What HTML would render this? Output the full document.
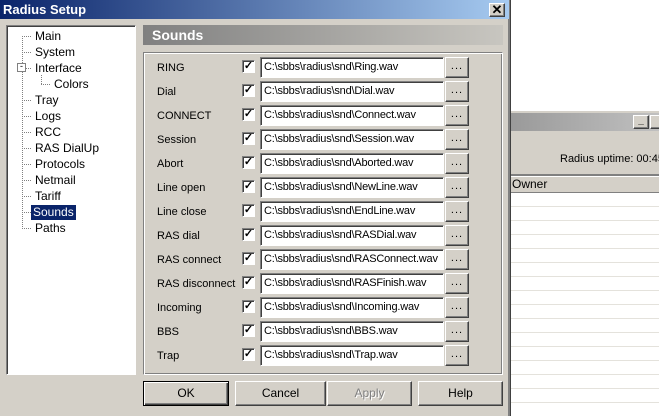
<!DOCTYPE html>
<html><head><style>
*{margin:0;padding:0;box-sizing:border-box}
body{width:659px;height:416px;background:#fff;position:relative;overflow:hidden;font-family:"Liberation Sans",sans-serif;font-size:11px;color:#000}
.a{position:absolute}
.raised{background:#d4d0c8;border:1px solid;border-color:#fff #404040 #404040 #fff;box-shadow:inset -1px -1px 0 #808080}
.sunk{background:#fff;border:1px solid;border-color:#808080 #fff #fff #808080;box-shadow:inset 1px 1px 0 #404040}
.ti{position:absolute;left:33px;height:14px;line-height:14px;padding:0 2px;font-size:12px}
.dh{position:absolute;left:15px;width:12px;border-top:1px dotted #808080}
.lbl{position:absolute;left:157px;font-size:11px}
.cb{position:absolute;left:242px;width:13px;height:13px}
.tf{position:absolute;left:260px;width:184px;height:21px;padding:3px 0 0 3px;font-size:11px;letter-spacing:-0.2px;white-space:nowrap;overflow:hidden}
.bb{position:absolute;left:445px;width:24px;height:21px;text-align:center;line-height:17px;font-size:11px;letter-spacing:1px}
.btn{position:absolute;top:381px;height:25px;text-align:center;line-height:23px;font-size:12px}
</style></head><body>
<div class="a" style="left:511px;top:0;width:148px;height:113px;background:#fff"></div>
<div class="a" style="left:511px;top:111px;width:148px;height:2px;background:#d4d0c8"></div>
<div class="a" style="left:511px;top:113px;width:148px;height:18px;background:linear-gradient(90deg,#9a9a9a,#c0c0c0)"></div>
<div class="a raised" style="left:633px;top:115px;width:16px;height:14px;font-size:10px;line-height:10px;text-align:center;font-weight:bold">_</div>
<div class="a raised" style="left:650px;top:115px;width:16px;height:14px"></div>
<div class="a" style="left:511px;top:131px;width:148px;height:45px;background:#d4d0c8;border-bottom:2px solid #808080"></div>
<div class="a" style="left:560px;top:153px;font-size:11px;white-space:nowrap">Radius uptime: 00:45</div>
<div class="a" style="left:511px;top:176px;width:148px;height:17px;background:#d4d0c8;border-top:1px solid #fff;border-bottom:1px solid #808080;font-size:12px;line-height:15px;padding-left:1px">Owner</div>
<div class="a" style="left:511px;top:193px;width:148px;height:223px;background:repeating-linear-gradient(180deg,#fff 0 13px,#e4e2dc 13px 14px)"></div>
<div class="a" style="left:0;top:0;width:511px;height:416px;background:#d4d0c8;border-right:1px solid #404040;box-shadow:inset -2px 0 0 #808080"></div>
<div class="a" style="left:0;top:0;width:509px;height:19px;background:linear-gradient(90deg,#0a246a,#a6caf0)"></div>
<div class="a" style="left:3px;top:2px;color:#fff;font-weight:bold;font-size:13px">Radius Setup</div>
<div class="a raised" style="left:489px;top:3px;width:16px;height:14px;font-size:13px;line-height:11px;text-align:center;font-weight:bold">✕</div>
<div class="a sunk" style="left:6px;top:25px;width:130px;height:350px"></div>
<div class="a" style="left:22px;top:36px;height:193px;border-left:1px dotted #808080"></div>
<div class="a" style="left:41px;top:75px;height:9px;border-left:1px dotted #808080"></div>
<div class="dh" style="top:36px;left:22px;width:9px"></div>
<div class="dh" style="top:52px;left:22px;width:9px"></div>
<div class="dh" style="top:68px;left:22px;width:9px"></div>
<div class="dh" style="top:84px;left:41px;width:9px"></div>
<div class="dh" style="top:100px;left:22px;width:9px"></div>
<div class="dh" style="top:116px;left:22px;width:9px"></div>
<div class="dh" style="top:132px;left:22px;width:9px"></div>
<div class="dh" style="top:148px;left:22px;width:9px"></div>
<div class="dh" style="top:164px;left:22px;width:9px"></div>
<div class="dh" style="top:180px;left:22px;width:9px"></div>
<div class="dh" style="top:196px;left:22px;width:9px"></div>
<div class="dh" style="top:212px;left:22px;width:9px"></div>
<div class="dh" style="top:228px;left:22px;width:9px"></div>
<div class="a" style="left:17px;top:63px;width:9px;height:9px;background:#fff;border:1px solid #808080;font-size:9px;line-height:5px;text-align:center">-</div>
<div class="ti" style="top:29px">Main</div>
<div class="ti" style="top:45px">System</div>
<div class="ti" style="top:61px">Interface</div>
<div class="ti" style="top:77px;left:52px">Colors</div>
<div class="ti" style="top:93px">Tray</div>
<div class="ti" style="top:109px">Logs</div>
<div class="ti" style="top:125px">RCC</div>
<div class="ti" style="top:141px">RAS DialUp</div>
<div class="ti" style="top:157px">Protocols</div>
<div class="ti" style="top:173px">Netmail</div>
<div class="ti" style="top:189px">Tariff</div>
<div class="ti" style="top:205px;background:#0a246a;color:#fff;left:31px;height:15px">Sounds</div>
<div class="ti" style="top:221px">Paths</div>
<div class="a" style="left:143px;top:25px;width:360px;height:20px;background:linear-gradient(90deg,#808080,#c8c6c0);color:#fff;font-weight:bold;font-size:14px;line-height:20px;padding-left:9px">Sounds</div>
<div class="a" style="left:143px;top:52px;width:360px;height:323px;border:1px solid;border-color:#808080 #fff #fff #808080;box-shadow:inset 1px 1px 0 #fff,inset -1px -1px 0 #808080"></div>
<div id="rows"></div>
<script>
var L=["RING","Dial","CONNECT","Session","Abort","Line open","Line close","RAS dial","RAS connect","RAS disconnect","Incoming","BBS","Trap"];
var F=["Ring","Dial","Connect","Session","Aborted","NewLine","EndLine","RASDial","RASConnect","RASFinish","Incoming","BBS","Trap"];
var h="";
for(var i=0;i<13;i++){var y=58+i*24;
h+='<div class="lbl" style="top:'+(y+4)+'px">'+L[i]+'</div>';
h+='<div class="cb sunk" style="top:'+(y+2)+'px;font-size:11px;line-height:10px;text-align:center;font-weight:bold">✓</div>';
h+='<div class="tf sunk" style="top:'+(y-1)+'px">C:\\sbbs\\radius\\snd\\'+F[i]+'.wav</div>';
h+='<div class="bb raised" style="top:'+(y-1)+'px">...</div>';}
document.getElementById("rows").innerHTML=h;
</script>
<div class="btn raised" style="left:143px;width:86px;border:1px solid #000;box-shadow:inset 1px 1px 0 #fff,inset -1px -1px 0 #404040,inset -2px -2px 0 #808080">OK</div>
<div class="btn raised" style="left:235px;width:91px">Cancel</div>
<div class="btn raised" style="left:327px;width:85px;color:#808080;text-shadow:1px 1px 0 #fff">Apply</div>
<div class="btn raised" style="left:418px;width:85px">Help</div>
</body></html>
